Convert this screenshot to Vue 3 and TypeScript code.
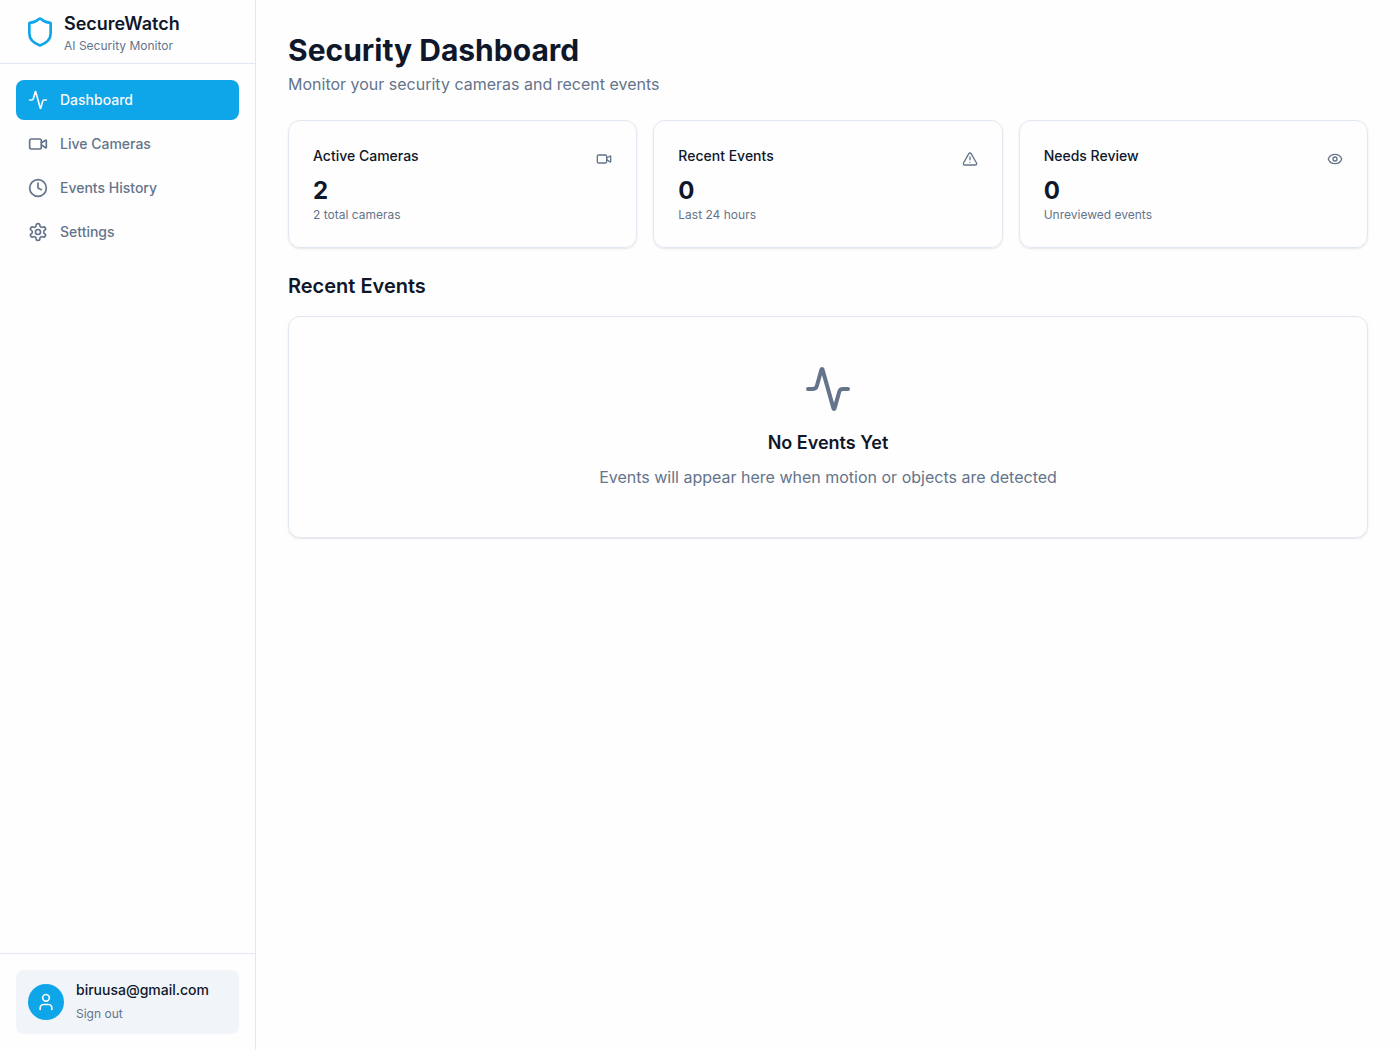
<script setup lang="ts">
import { ref } from 'vue'

type IconName = 'activity' | 'video' | 'clock' | 'settings' | 'alert' | 'eye' | 'shield' | 'user'

const icons: Record<IconName, string[]> = {
  activity: [
    'M22 12h-2.48a2 2 0 0 0-1.93 1.46l-2.35 8.36a.25.25 0 0 1-.48 0L9.24 2.18a.25.25 0 0 0-.48 0l-2.35 8.36A2 2 0 0 1 4.49 12H2',
  ],
  video: [
    'm16 13 5.223 3.482a.5.5 0 0 0 .777-.416V7.87a.5.5 0 0 0-.752-.432L16 10.5',
    'M4 6h10a2 2 0 0 1 2 2v8a2 2 0 0 1-2 2H4a2 2 0 0 1-2-2V8a2 2 0 0 1 2-2z',
  ],
  clock: ['M12 2a10 10 0 1 0 0 20 10 10 0 1 0 0-20z', 'M12 6v6l4 2'],
  settings: [
    'M12.22 2h-.44a2 2 0 0 0-2 2v.18a2 2 0 0 1-1 1.73l-.43.25a2 2 0 0 1-2 0l-.15-.08a2 2 0 0 0-2.73.73l-.22.38a2 2 0 0 0 .73 2.73l.15.1a2 2 0 0 1 1 1.72v.51a2 2 0 0 1-1 1.74l-.15.09a2 2 0 0 0-.73 2.73l.22.38a2 2 0 0 0 2.73.73l.15-.08a2 2 0 0 1 2 0l.43.25a2 2 0 0 1 1 1.73V20a2 2 0 0 0 2 2h.44a2 2 0 0 0 2-2v-.18a2 2 0 0 1 1-1.73l.43-.25a2 2 0 0 1 2 0l.15.08a2 2 0 0 0 2.73-.73l.22-.39a2 2 0 0 0-.73-2.73l-.15-.08a2 2 0 0 1-1-1.74v-.5a2 2 0 0 1 1-1.74l.15-.09a2 2 0 0 0 .73-2.73l-.22-.38a2 2 0 0 0-2.73-.73l-.15.08a2 2 0 0 1-2 0l-.43-.25a2 2 0 0 1-1-1.73V4a2 2 0 0 0-2-2z',
    'M12 9a3 3 0 1 0 0 6 3 3 0 1 0 0-6z',
  ],
  alert: [
    'm21.73 18-8-14a2 2 0 0 0-3.48 0l-8 14A2 2 0 0 0 4 21h16a2 2 0 0 0 1.73-3',
    'M12 9v4',
    'M12 17h.01',
  ],
  eye: [
    'M2.062 12.348a1 1 0 0 1 0-.696 10.75 10.75 0 0 1 19.876 0 1 1 0 0 1 0 .696 10.75 10.75 0 0 1-19.876 0',
    'M12 9a3 3 0 1 0 0 6 3 3 0 1 0 0-6z',
  ],
  shield: [
    'M20 13c0 5-3.5 7.5-7.66 8.95a1 1 0 0 1-.67-.01C7.5 20.5 4 18 4 13V6a1 1 0 0 1 1-1c2 0 4.5-1.2 6.24-2.72a1.17 1.17 0 0 1 1.52 0C14.51 3.81 17 5 19 5a1 1 0 0 1 1 1z',
  ],
  user: ['M19 21v-2a4 4 0 0 0-4-4H9a4 4 0 0 0-4 4v2', 'M12 3a4 4 0 1 0 0 8 4 4 0 1 0 0-8z'],
}

interface NavItem {
  label: string
  icon: IconName
}

const navItems: NavItem[] = [
  { label: 'Dashboard', icon: 'activity' },
  { label: 'Live Cameras', icon: 'video' },
  { label: 'Events History', icon: 'clock' },
  { label: 'Settings', icon: 'settings' },
]
const current = ref('Dashboard')

interface Stat {
  title: string
  value: number
  note: string
  icon: IconName
}

const stats: Stat[] = [
  { title: 'Active Cameras', value: 2, note: '2 total cameras', icon: 'video' },
  { title: 'Recent Events', value: 0, note: 'Last 24 hours', icon: 'alert' },
  { title: 'Needs Review', value: 0, note: 'Unreviewed events', icon: 'eye' },
]
</script>

<template>
  <div class="layout">
    <aside class="sidebar">
      <header class="brand">
        <svg class="icon brand-icon" viewBox="0 0 24 24" aria-hidden="true">
          <path v-for="d in icons.shield" :key="d" :d="d" />
        </svg>
        <div>
          <div class="brand-name">SecureWatch</div>
          <div class="small">AI Security Monitor</div>
        </div>
      </header>

      <nav class="nav" aria-label="Main">
        <a
          v-for="item in navItems"
          :key="item.label"
          href="#"
          class="nav-link"
          :class="{ active: item.label === current }"
          :aria-current="item.label === current ? 'page' : undefined"
          @click.prevent="current = item.label"
        >
          <svg class="icon nav-icon" viewBox="0 0 24 24" aria-hidden="true">
            <path v-for="d in icons[item.icon]" :key="d" :d="d" />
          </svg>
          {{ item.label }}
        </a>
      </nav>

      <footer class="account">
        <div class="account-card">
          <span class="avatar">
            <svg class="icon nav-icon" viewBox="0 0 24 24" aria-hidden="true">
              <path v-for="d in icons.user" :key="d" :d="d" />
            </svg>
          </span>
          <div class="account-text">
            <span class="email">biruusa@gmail.com</span>
            <button type="button" class="sign-out small">Sign out</button>
          </div>
        </div>
      </footer>
    </aside>

    <main class="main">
      <header>
        <h1>Security Dashboard</h1>
        <p class="subtitle">Monitor your security cameras and recent events</p>
      </header>

      <section class="stats" aria-label="Overview">
        <article v-for="stat in stats" :key="stat.title" class="card stat">
          <div class="stat-head">
            <h3 class="stat-title">{{ stat.title }}</h3>
            <svg class="icon stat-icon" viewBox="0 0 24 24" aria-hidden="true">
              <path v-for="d in icons[stat.icon]" :key="d" :d="d" />
            </svg>
          </div>
          <div class="stat-value">{{ stat.value }}</div>
          <p class="small">{{ stat.note }}</p>
        </article>
      </section>

      <section class="events">
        <h2>Recent Events</h2>
        <div class="card empty">
          <svg class="icon empty-icon" viewBox="0 0 24 24" aria-hidden="true">
            <path v-for="d in icons.activity" :key="d" :d="d" />
          </svg>
          <h3 class="empty-title">No Events Yet</h3>
          <p class="muted">Events will appear here when motion or objects are detected</p>
        </div>
      </section>
    </main>
  </div>
</template>

<style>
body {
  margin: 0;
  background: #fefefe;
}
</style>

<style scoped>
.layout {
  display: flex;
  min-height: 100vh;
  font-family: Inter, "Liberation Sans", sans-serif;
  font-size: 16px;
  line-height: 24px;
  color: #0f172a;
}

.layout * {
  box-sizing: border-box;
}

h1,
h2,
h3,
p {
  margin: 0;
}

.icon {
  display: block;
  flex: none;
  fill: none;
  stroke: currentColor;
  stroke-width: 2;
  stroke-linecap: round;
  stroke-linejoin: round;
}

.small {
  font-size: 12px;
  line-height: 16px;
  color: #64748b;
}

.muted {
  color: #64748b;
}

.sidebar {
  display: flex;
  flex: none;
  flex-direction: column;
  width: 256px;
  border-right: 1px solid #e2e8f0;
}

.brand {
  display: flex;
  align-items: center;
  gap: 8px;
  height: 64px;
  padding: 0 24px;
  border-bottom: 1px solid #e2e8f0;
}

.brand-icon {
  width: 32px;
  height: 32px;
  color: #0ea5e9;
}

.brand-name {
  font-size: 18px;
  line-height: 28px;
  font-weight: 600;
}

.nav {
  display: flex;
  flex: 1;
  flex-direction: column;
  gap: 4px;
  padding: 16px;
}

.nav-link {
  display: flex;
  align-items: center;
  gap: 12px;
  padding: 10px 12px;
  border-radius: 8px;
  font-size: 14px;
  line-height: 20px;
  font-weight: 500;
  color: #64748b;
  text-decoration: none;
}

.nav-link.active {
  background: #0ea5e9;
  color: #f8fafc;
}

.nav-icon {
  width: 20px;
  height: 20px;
}

.account {
  padding: 16px;
  border-top: 1px solid #e2e8f0;
}

.account-card {
  display: flex;
  align-items: center;
  gap: 12px;
  padding: 12px;
  border-radius: 8px;
  background: #f1f5f9;
}

.avatar {
  display: flex;
  flex: none;
  align-items: center;
  justify-content: center;
  width: 36px;
  height: 36px;
  border-radius: 50%;
  background: #0ea5e9;
  color: #f8fafc;
}

.account-text {
  display: flex;
  flex-direction: column;
  align-items: flex-start;
  gap: 8px;
  min-width: 0;
}

.email {
  font-size: 14px;
  line-height: 16px;
  font-weight: 500;
}

.sign-out {
  padding: 0;
  border: 0;
  background: none;
  font-family: inherit;
  cursor: pointer;
}

.main {
  display: flex;
  flex: 1;
  flex-direction: column;
  gap: 24px;
  min-width: 0;
  padding: 32px;
}

h1 {
  font-size: 30px;
  line-height: 36px;
  font-weight: 700;
}

.subtitle {
  margin-top: 4px;
  color: #64748b;
}

.card {
  border: 1px solid #e2e8f0;
  border-radius: 12px;
  box-shadow: 0 1px 2px rgba(0, 0, 0, 0.1);
}

.stats {
  display: grid;
  grid-template-columns: repeat(3, 1fr);
  gap: 16px;
}

.stat {
  padding: 24px;
}

.stat-head {
  display: flex;
  align-items: flex-end;
  justify-content: space-between;
  padding-bottom: 8px;
}

.stat-title {
  font-size: 14px;
  line-height: 22px;
  font-weight: 500;
}

.stat-icon {
  width: 16px;
  height: 16px;
  color: #64748b;
}

.stat-value {
  font-size: 24px;
  line-height: 32px;
  font-weight: 700;
}

.events {
  display: flex;
  flex-direction: column;
  gap: 16px;
}

h2 {
  font-size: 20px;
  line-height: 28px;
  font-weight: 600;
}

.empty {
  display: flex;
  flex-direction: column;
  align-items: center;
  padding: 48px 24px;
  text-align: center;
}

.empty-icon {
  width: 48px;
  height: 48px;
  margin-bottom: 16px;
  color: #64748b;
}

.empty-title {
  margin-bottom: 8px;
  font-size: 18px;
  line-height: 28px;
  font-weight: 600;
}
</style>
